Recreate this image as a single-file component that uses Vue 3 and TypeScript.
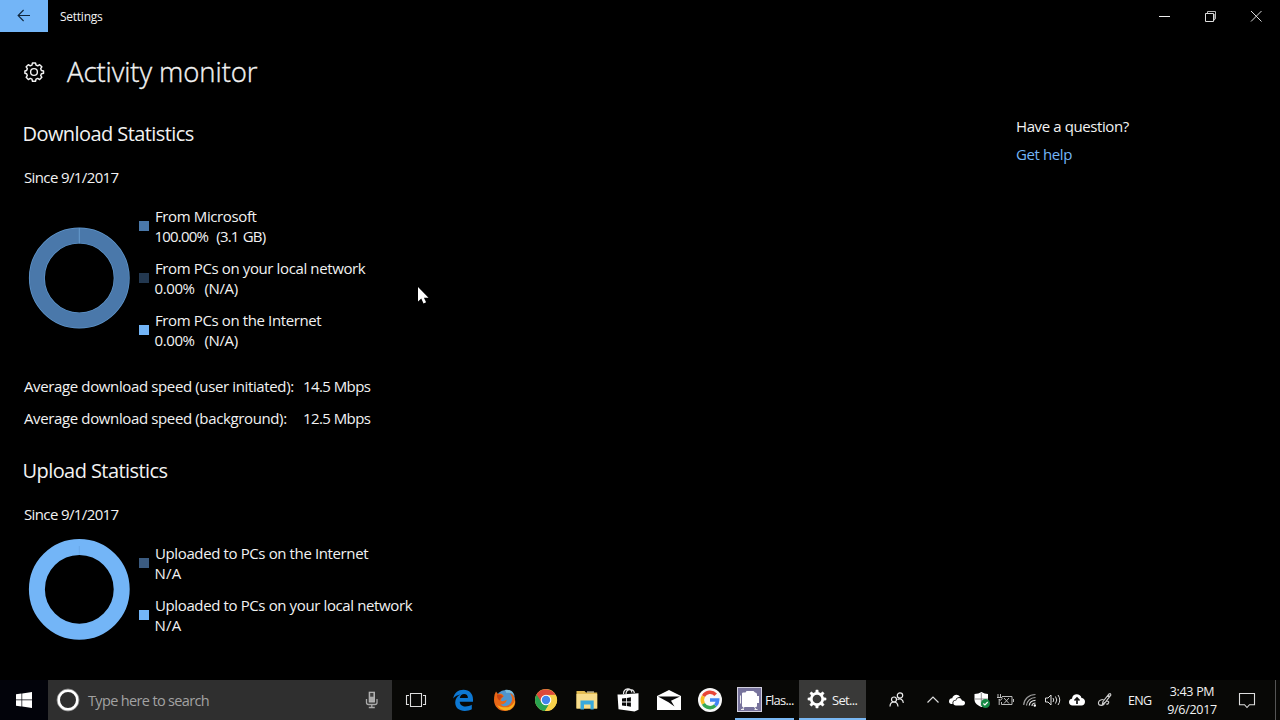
<script setup lang="ts">
interface LegendItem {
  label: string
  value: string
  tone: string
  fit: string
}

interface SpeedRow {
  label: string
  value: string
}

const downloads: LegendItem[] = [
  { label: 'From Microsoft', value: '100.00%\u00a0 (3.1 GB)', tone: 'mid', fit: 'tight' },
  { label: 'From PCs on your local network', value: '0.00%\u00a0 (N/A)', tone: 'dark', fit: 'normal' },
  { label: 'From PCs on the Internet', value: '0.00%\u00a0 (N/A)', tone: 'light', fit: 'normal' },
]

const uploads: LegendItem[] = [
  { label: 'Uploaded to PCs on the Internet', value: 'N/A', tone: 'slate', fit: 'loose' },
  { label: 'Uploaded to PCs on your local network', value: 'N/A', tone: 'light', fit: 'loose' },
]

const speeds: SpeedRow[] = [
  { label: 'Average download speed (user initiated):', value: '14.5 Mbps' },
  { label: 'Average download speed (background):', value: '12.5 Mbps' },
]

const teeth: number[] = [0, 45, 90, 135, 180, 225, 270, 315]
</script>

<template>
  <div class="screen">
    <header class="titlebar">
      <button class="back" aria-label="Back">
        <svg width="48" height="32" viewBox="0 0 48 32"><path d="M30 15.5H18.2M23.6 10l-5.5 5.5 5.5 5.5" fill="none" stroke="#10263c" stroke-width="1.1" /></svg>
      </button>
      <span class="app-name">Settings</span>
      <div class="window-buttons">
        <svg width="46" height="32" viewBox="0 0 46 32"><path d="M17 16.5h11" stroke="#eee" fill="none" /></svg>
        <svg width="46" height="32" viewBox="0 0 46 32">
          <path d="M26 14h2v4.500L26 21z" fill="#777" />
          <path d="M19.500 13.500v-2h8v7l-2 2" stroke="#bbb" fill="none" />
          <path d="M17.500 13.500h8v8h-8z" stroke="#ddd" fill="none" />
        </svg>
        <svg width="46" height="32" viewBox="0 0 46 32"><path d="M17 11l10.500 10.500M27.500 11L17 21.500" stroke="#ddd" fill="none" /></svg>
      </div>
    </header>

    <main class="content">
      <div class="page-title">
        <svg class="gear" width="24" height="24" viewBox="-1.800 -1.800 27.600 27.600">
          <path d="M10.25 2.500h3.500l.6 2.450 1.950.8 2.200-1.300 2.500 2.500-1.300 2.200.8 1.950 2.450.6v2.600l-2.450.6-.8 1.950 1.300 2.200-2.500 2.500-2.200-1.300-1.950.8-.6 2.450h-3.500l-.6-2.450-1.950-.8-2.200 1.300L3 19.050l1.300-2.200-.8-1.950-1.950-.6v-2.600l1.950-.6.8-1.950L3 6.950l2.500-2.500 2.200 1.300 1.950-.8z" transform="translate(0 -.9)" fill="none" stroke="#f2f2f2" stroke-width="1.700" stroke-linejoin="round" />
          <circle cx="12" cy="12" r="3.900" fill="none" stroke="#f2f2f2" stroke-width="1.600" />
        </svg>
        <h1>Activity monitor</h1>
      </div>

      <div class="columns">
        <div class="stats">
          <section>
            <h2>Download Statistics</h2>
            <p class="since">Since 9/1/2017</p>
            <div class="chart-row">
              <svg class="donut" width="102" height="102" viewBox="0 0 102 102">
                <circle cx="51.300" cy="51" r="42.400" fill="none" stroke="#6098cf" stroke-width="16" />
                <circle cx="51.300" cy="51" r="42.400" fill="none" stroke="#4a78aa" stroke-width="14.600" />
                <path d="M51.300 1v15.500" stroke="#659ace" stroke-width="1" />
              </svg>
              <ul class="legend">
                <li v-for="item in downloads" :key="item.label">
                  <i :class="['swatch', item.tone]"></i>
                  <div><div class="label">{{ item.label }}</div><div :class="['value', item.fit]">{{ item.value }}</div></div>
                </li>
              </ul>
            </div>
            <dl class="speeds">
              <template v-for="row in speeds" :key="row.label">
                <dt>{{ row.label }}</dt>
                <dd>{{ row.value }}</dd>
              </template>
            </dl>
          </section>
          <section class="upload">
            <h2>Upload Statistics</h2>
            <p class="since">Since 9/1/2017</p>
            <div class="chart-row">
              <svg class="donut" width="102" height="102" viewBox="0 0 102 102">
                <circle cx="51.300" cy="51.300" r="42.400" fill="none" stroke="#73b5f7" stroke-width="16" />
                <path d="M51.300 8v8.500" stroke="#68a8e8" stroke-width="1" />
              </svg>
              <ul class="legend">
                <li v-for="item in uploads" :key="item.label">
                  <i :class="['swatch', item.tone]"></i>
                  <div><div class="label">{{ item.label }}</div><div :class="['value', item.fit]">{{ item.value }}</div></div>
                </li>
              </ul>
            </div>
          </section>
        </div>
        <aside class="help">
          <div class="question">Have a question?</div>
          <a class="get-help">Get help</a>
        </aside>
      </div>
    </main>

    <footer class="taskbar">
      <div class="start">
        <svg width="16" height="16" viewBox="0 0 16 16"><path d="M0 2.300l5.500-.8v6.100H0zM6.200 1.400L16 0v7.600H6.200zM0 8.300h5.500v6.100L0 13.700zM6.200 8.300H16V16l-9.800-1.400z" fill="#fff" /></svg>
      </div>
      <div class="search">
        <svg class="cortana" width="24" height="24" viewBox="0 0 24 24"><circle cx="12" cy="12" r="9.400" fill="none" stroke="#fff" stroke-width="2.800" /><circle cx="12" cy="12" r="11" fill="none" stroke="#999" stroke-width=".7" /></svg>
        <span class="placeholder">Type here to search</span>
        <svg class="mic" width="14" height="18" viewBox="0 0 14 18">
          <rect x="4.200" y="1.200" width="5.200" height="9.800" fill="#aaa" stroke="#bbb" />
          <rect x="5.200" y="2" width="3.200" height="3.700" fill="#414141" />
          <path d="M1.500 8v3.500q0 2 2 2H10q2 0 2-2V8M6.800 13.500v2.800M3.800 16.500h6" fill="none" stroke="#aaa" stroke-width="1.300" />
        </svg>
      </div>
      <div class="task-view">
        <svg width="22" height="18" viewBox="0 0 22 18"><path d="M5.500 2.500h11v13h-11zM4 4.500H1.500v9H4M18 4.500h2.500v9H18" fill="none" stroke="#ddd" stroke-width="1.100" /></svg>
      </div>
      <div class="pinned">
        <svg width="24" height="24" viewBox="1 0 24 24">
          <path d="M2.200 10.500C3.200 5.200 7 1.800 12.500 1.800c6 0 9.500 4.200 9.500 9.400v2.600H8.700c.2 3.200 2.700 4.700 5.900 4.700 2.300 0 4.300-.6 6.200-1.700v4.500c-2 1.100-4.400 1.600-7 1.600-5.800 0-9.600-3.200-9.600-8.400 0-3.600 2-6.600 5.400-8-3 .3-5.700 1.900-7.400 4zM8.800 10h8.100c0-2.400-1.400-3.900-3.800-3.900-2.200 0-3.800 1.400-4.300 3.900z" fill="#0d78d3" />
        </svg>
        <svg width="24" height="24" viewBox="0 0 24 24">
          <circle cx="12.500" cy="11.500" r="9.500" fill="#4f95cf" />
          <path d="M12 2c5-1 9 2 9.500 6-2-3-5-4-8-3z" fill="#79bddf" />
          <path d="M1.600 6.500L3 3.500l2 2.500q2-1 4 0l2 2.200-2.300 2.100-1 2.500q3 1 6-1c-.6 3.800-4 5-6.200 4.600 4 3.800 10.800 1 11.500-4.400.4-3-1-5.200-2-6.800 3 .7 4.700 3.800 5.200 7.500C23 18.200 18.200 23 12 23 5.500 23 1 18.200 1 12c0-2 .2-3.700.6-5.500z" fill="#e96716" />
          <path d="M4 17c2.500 4 5.500 5.400 9 5.400 5.500 0 8.900-4.700 9.100-10.400-1.400 4.600-5 7.500-9.600 7.300-3.500 0-6-.8-8.500-2.300z" fill="#f9b21d" />
          <path d="M4 6.500l4 .5 2 1.500-2 1.500-1.500 2.500Q3.500 10 4 6.500z" fill="#c84313" />
        </svg>
        <svg width="24" height="24" viewBox="0 0 24 24">
          <circle cx="12" cy="12" r="11" fill="#f4d044" />
          <path d="M12 12L2.500 6.500A11 11 0 0 0 11 23l5-8.500z" fill="#29a350" />
          <path d="M2.500 6.500A11 11 0 0 1 21.500 6.800L12 7 7.700 14.500z" fill="#de493b" />
          <path d="M12 7h9.800A11 11 0 0 1 11 23l5.400-8.500z" fill="#f8d149" />
          <circle cx="12" cy="12" r="5.300" fill="#fff" /><circle cx="12" cy="12" r="4.200" fill="#4284ec" />
        </svg>
        <svg width="24" height="24" viewBox="0 0 24 24">
          <path d="M1.500 3h8l1.500 1.500h11.200v16H1.500z" fill="#e4bd52" />
          <path d="M1.500 6h20.700v14.500H1.500z" fill="#f7dc8b" /><path d="M12 4h7" stroke="#fff2c5" />
          <path d="M5.500 12.500h13.200v9h-3.200v-5H9v5H5.500z" fill="#38a9dc" />
        </svg>
        <svg width="24" height="24" viewBox="-1 0 24 24">
          <path d="M6.500 6C6.500-.5 15 -.5 14.800 4.500M9 6c0-6 8-5.500 8.300-1" fill="none" stroke="#e8e8e8" stroke-width="1.200" />
          <path d="M.5 6.500h3l18-1.300v16.500l-4 1.800-16-2.200z" fill="#fff" />
          <path d="M5 10.500l4-.5v3.600H5zM9.800 9.900l4.100-.6v4.300H9.800zM5 14.400h4V18l-4-.5zM9.800 14.400h4.100v4.300l-4.100-.6z" fill="#080808" />
        </svg>
        <svg width="26" height="24" viewBox="0 0 26 24">
          <path d="M1 8L13 2l12 6v14H1z" fill="#fff" />
          <path d="M2 8.500h22l-9 4.200 3.500 5.800-6-4.300z" fill="#090909" />
        </svg>
        <svg width="24" height="24" viewBox="0 0 24 24">
          <circle cx="12" cy="12" r="12" fill="#f8f8f8" />
          <g fill="none" stroke-width="3.500">
            <path d="M17.700 6.800A7.700 7.700 0 0 0 5.400 8.100" stroke="#e84537" />
            <path d="M5.400 8.100a7.700 7.700 0 0 0 0 7.800" stroke="#f7bd20" />
            <path d="M5.400 15.900a7.700 7.700 0 0 0 11.900 1.600" stroke="#34a853" />
            <path d="M12 12h7.700a7.700 7.700 0 0 1-2.400 5.500" stroke="#4285f4" />
          </g>
        </svg>
      </div>
      <div class="task flash">
        <svg width="25" height="25" viewBox="0 0 25 25">
          <rect x=".5" y=".5" width="24" height="24" fill="#77739c" stroke="#d2d0df" />
          <path d="M5 6.500q0-1 1.500-1h2L9.500 4h7l1.500 1.500q2 0 2 2V9h2v7h-2v3q0 1-1 1H6q-1 0-1-1z" fill="#fff" /><path d="M3.500 8.500v8M7 20l-1.500 2.500M17.500 20l1.500 2.500M4 22.500h3M17.500 22.500h3" stroke="#eee" fill="none" />
        </svg>
        <span>Flas...</span>
      </div>
      <div class="task current">
        <svg width="20" height="20" viewBox="0 0 20 20">
          <circle cx="10" cy="10" r="5.700" fill="none" stroke="#fff" stroke-width="2.700" />
          <path v-for="angle in teeth" :key="angle" d="M8.500 3.800l.4-2.900h2.200l.4 2.900z" :transform="`rotate(${angle} 10 10)`" fill="#fff" stroke="#fff" stroke-width=".4" />
        </svg>
        <span>Set...</span>
      </div>
      <div class="tray">
        <svg class="people" width="18" height="18" viewBox="0 0 18 18"><g fill="none" stroke="#eee" stroke-width="1.200"><circle cx="6" cy="8.500" r="2.500" /><path d="M2 15.500c.2-6 7.500-6 8 0" /><circle cx="12" cy="4.500" r="2.700" /><path d="M9.500 8.500c2.600-1.700 5.400-.2 5.900 3.300" /></g></svg>
        <svg class="chevron" width="14" height="12" viewBox="0 0 14 12"><path d="M1.500 8.500L7 3l5.500 5.500" fill="none" stroke="#ddd" stroke-width="1.200" /></svg>
        <svg width="18" height="14" viewBox="0 0 18 14"><path d="M1 8.500C1 6 3 5 4.200 5.300 5 1.500 10 .5 12 4c-3 0-4 1.500-4.500 3C5 7 4.200 9 4.500 11 2.500 11 1 10.500 1 8.500z" fill="#fff" /><path d="M5.300 10c0-2 1.200-2.700 2.800-2.500C9 4.200 13 4.200 14 7.500c2 0 3 1.100 3 2.500s-1 2.500-2.500 2.500H8C6.200 12.500 5.300 11.500 5.300 10z" fill="#fff" /></svg>
        <svg class="shield" width="18" height="18" viewBox="0 0 18 18"><path d="M8.500 1q3 2 6.500 2v5.500c0 4-3 6-6.500 7.500C5 14.500 1.500 12.500 1.500 8.500V3Q5.500 3 8.500 1z" fill="#fff" /><path d="M8.300 2v13M2 8h13" stroke="#777" stroke-width=".8" /><circle cx="12.500" cy="12.500" r="4.500" fill="#168a45" /><path d="M10.400 12.500l1.500 1.500 2.800-3" fill="none" stroke="#fff" stroke-width="1.100" /></svg>
        <svg class="battery" width="18" height="14" viewBox="0 0 18 14"><g fill="none" stroke="#bbb"><path d="M6 3.500h10v8H5.500V9M17.500 6v3M8 5l5 5.500M13 5l-5 5.500" /><path d="M2 1v3M4.500 1v3M1 4.500h5v1.200Q3.500 9 3.200 6v6" /></g></svg>
        <svg class="wifi" width="16" height="16" viewBox="0 0 16 16"><g fill="none" stroke="#999" stroke-width="1.200"><path d="M1.700 13C2 7 7 2.500 13.500 2.500" /><path d="M4.500 13.500c.3-4.400 4-8 9-8" stroke="#aaa" /><path d="M7.300 13.500c.2-3 2.700-5.200 6.200-5.200" stroke="#ddd" /><path d="M10 14c0-1.700 1.400-3 3.500-3" stroke="#ddd" /></g><circle cx="12.800" cy="13.500" r="1.200" fill="#fff" /></svg>
        <svg class="speaker" width="18" height="14" viewBox="0 0 18 14"><g fill="none" stroke="#ddd"><path d="M1.500 5H4l3-3v10L4 9H1.500z" /><path d="M9 5q1.500 2 0 4M11.500 3.500q2.500 3.500 0 7M14 2q3.500 5 0 10" /></g></svg>
        <svg class="cloud" width="18" height="16" viewBox="0 0 18 16"><path d="M4.500 13.500C2.500 13.500 1 12 1 10s1.300-3.200 3-3.300C4.300 1 12.500.8 13.500 6c2.200.1 3.500 1.700 3.500 3.700 0 2.200-1.500 3.800-3.500 3.800z" fill="#fff" /><path d="M9 12V6M6.500 8.500L9 6l2.500 2.500" stroke="#111" stroke-width="1.700" fill="none" /></svg>
        <svg class="pen" width="16" height="16" viewBox="0 0 16 16"><path d="M6 9.500L12 2q1.800-1 1.800 1L7.800 11l-2.300.8zM11 3.300l1.600 1.200M6.500 7.500Q2 7.500 1.500 10.500t3.300 2.800q2.700-.3 3-3.300M8.500 9.500q3.500-1 3.200 1t-2.500 1.500" fill="none" stroke="#ccc" stroke-width="1.200" /></svg>
        <span class="lang">ENG</span>
        <div class="clock"><div class="time">3:43 PM</div><div class="date">9/6/2017</div></div>
        <svg class="action" width="18" height="18" viewBox="0 0 18 18"><path d="M1.500 2.500h15v11.200h-5L9 16.500l-2.500-2.800h-5z" fill="none" stroke="#ddd" stroke-width="1.100" /></svg>
      </div>
      <div class="show-desktop"></div>
    </footer>

    <svg class="cursor" width="14" height="20" viewBox="0 0 14 20"><path d="M1 1v14.500l3.300-3 2.200 4.900 2.600-1.200-2.200-4.500h4.600z" fill="#fff" /></svg>
  </div>
</template>

<style>
html,
body {
  margin: 0;
  background: #000;
  overflow: hidden;
}
</style>

<style scoped>
.screen {
  position: relative;
  display: flex;
  flex-direction: column;
  width: 1280px;
  height: 720px;
  overflow: hidden;
  background: #000;
  color: #f2f2f2;
  font-family: "Open Sans", "Noto Sans", sans-serif;
  font-size: 15px;
  line-height: 20px;
  white-space: nowrap;
}

svg {
  display: block;
  flex: none;
}

h1,
h2,
p,
ul,
dl,
dd {
  margin: 0;
  padding: 0;
}

.titlebar {
  display: flex;
  flex: none;
  height: 32px;
}

.back {
  width: 48px;
  height: 32px;
  padding: 0;
  border: 0;
  background: #73b5f7;
}

.app-name {
  margin-left: 12px;
  font-size: 12px;
  line-height: 33px;
  letter-spacing: -0.25px;
}

.window-buttons {
  display: flex;
  margin-left: auto;
}

.content {
  flex: 1;
  min-height: 0;
}

.page-title {
  display: flex;
  align-items: center;
  height: 80px;
  padding-left: 22px;
}

h1 {
  margin-left: 21px;
  font-size: 27.5px;
  font-weight: 300;
  line-height: 40px;
  letter-spacing: -0.08px;
  -webkit-text-stroke: 0.35px #f2f2f2;
}

.columns {
  display: flex;
}

.stats {
  width: 992px;
  padding: 8px 0 0 24px;
}

h2 {
  margin-left: -1.5px;
  font-size: 20px;
  font-weight: 400;
  line-height: 28px;
  letter-spacing: -0.57px;
}

.since {
  margin-top: 19px;
  letter-spacing: -0.62px;
}

.chart-row {
  display: flex;
  align-items: center;
  margin: 19px 0 0 4px;
}

.legend {
  display: flex;
  flex-direction: column;
  gap: 12px;
  margin-left: 9px;
  list-style: none;
}

.legend li {
  display: flex;
  align-items: center;
  gap: 6px;
}

.label {
  letter-spacing: -0.38px;
}

.value {
  margin-left: -0.5px;
}

.normal {
  letter-spacing: -0.4px;
  word-spacing: 1.5px;
}

.tight {
  letter-spacing: -0.8px;
  word-spacing: 1px;
}

.loose {
  letter-spacing: 0.2px;
}

.help {
  letter-spacing: -0.4px;
}

.swatch {
  width: 10px;
  height: 10px;
}

.mid { background: #4a78aa; }
.dark { background: #233850; }
.light { background: #73b5f7; }
.slate { background: #3b5b80; }

.speeds {
  display: grid;
  grid-template-columns: 279px auto;
  row-gap: 12px;
  margin-top: 26px;
  letter-spacing: -0.37px;
}

.speeds dd {
  letter-spacing: -0.58px;
}

.upload {
  margin-top: 29px;
}

.upload .chart-row {
  margin-top: 14px;
}

.help {
  padding-top: 4px;
}

.get-help {
  display: block;
  margin-top: 8px;
  color: #73b5f7;
}

.taskbar {
  display: flex;
  flex: none;
  align-items: center;
  height: 40px;
  background: #080806;
  font-size: 12.5px;
}

.start {
  display: flex;
  align-items: center;
  justify-content: center;
  width: 48px;
  height: 40px;
  background: #02030a;
}

.search {
  display: flex;
  align-items: center;
  width: 344px;
  height: 40px;
  background: #2f2f2f;
}

.cortana {
  margin-left: 8px;
}

.placeholder {
  margin: 2px 0 0 8px;
  color: #a2a2a2;
  font-size: 14.5px;
  letter-spacing: -0.65px;
}

.mic {
  margin: 0 13px 0 auto;
}

.task-view {
  display: flex;
  justify-content: center;
  width: 48px;
}

.pinned {
  display: grid;
  grid-template-columns: repeat(7, 41px);
  justify-items: center;
  align-items: center;
  width: 287px;
  margin-left: 3px;
}

.task {
  box-sizing: border-box;
  display: flex;
  align-items: center;
  height: 40px;
  border-bottom: 2px solid #79b7f2;
  font-size: 13px;
  letter-spacing: -0.7px;
}

.task span {
  margin-top: 2px;
}

.flash {
  width: 59px;
  margin-left: 5px;
  padding-left: 2px;
  gap: 3px;
}

.current {
  width: 67px;
  margin-left: 5px;
  padding-left: 8px;
  gap: 5px;
  background: #393938;
}

.tray {
  display: flex;
  align-items: center;
  width: 409px;
  height: 40px;
}

.people { margin-left: 22px; }
.chevron { margin: 0 8px 0 20px; }
.shield { margin-left: 7px; }
.battery { margin-left: 5px; }
.wifi { margin-left: 8px; }
.speaker { margin-left: 6px; }
.cloud { margin-left: 6px; }
.pen { margin-left: 11px; }

.lang {
  width: 24px;
  margin: 1px 0 0 15px;
  letter-spacing: -0.7px;
}

.clock {
  width: 60px;
  margin-left: 10px;
  padding-top: 1px;
  text-align: center;
  line-height: 18px;
  letter-spacing: -0.3px;
}

.action {
  margin-left: 16px;
}

.show-desktop {
  height: 40px;
  border-left: 1px solid #555;
}

.cursor {
  position: absolute;
  left: 417px;
  top: 286px;
}
</style>
